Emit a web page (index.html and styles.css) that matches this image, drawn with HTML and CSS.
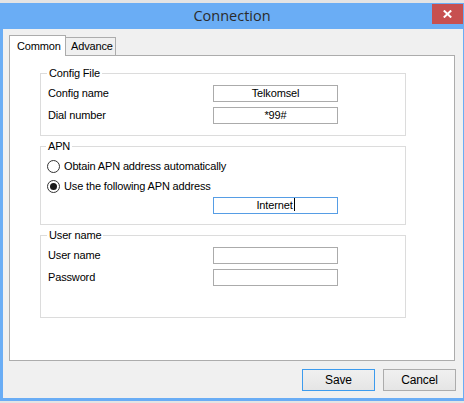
FILE: index.html
```html
<!DOCTYPE html>
<html>
<head>
<meta charset="utf-8">
<link rel="stylesheet" href="styles.css">
</head>
<body>
<div class="screen">
  <div class="window">
    <div class="titlebar">
      <span class="spacer"></span>
      <span class="title">Connection</span>
      <span class="controls">
        <span class="close">
          <svg width="9" height="8" viewBox="0 0 9 8"><path d="M0.8 0.5 L8.2 7.5 M8.2 0.5 L0.8 7.5" stroke="#fff" stroke-width="2" fill="none"/></svg>
        </span>
      </span>
    </div>
    <div class="client">
      <div class="tabs">
        <div class="tab active">Common</div>
        <div class="tab">Advance</div>
      </div>
      <div class="panel">
        <fieldset class="group g1">
          <legend>Config File</legend>
          <div class="row"><span class="label">Config name</span><span class="input">Telkomsel</span></div>
          <div class="row"><span class="label">Dial number</span><span class="input">*99#</span></div>
        </fieldset>
        <fieldset class="group g2">
          <legend>APN</legend>
          <div class="radio-row"><span class="radio"></span><span>Obtain APN address automatically</span></div>
          <div class="radio-row"><span class="radio checked"></span><span>Use the following APN address</span></div>
          <div class="row indent"><span class="input focus">Internet<span class="caret"></span></span></div>
        </fieldset>
        <fieldset class="group g3">
          <legend>User name</legend>
          <div class="row"><span class="label">User name</span><span class="input"></span></div>
          <div class="row"><span class="label">Password</span><span class="input"></span></div>
        </fieldset>
      </div>
      <div class="buttons">
        <div class="btn default">Save</div>
        <div class="btn">Cancel</div>
      </div>
    </div>
  </div>
</div>
</body>
</html>
```

FILE: styles.css
```css
html, body {
  margin: 0;
  padding: 0;
}
body {
  background: #e4e4e4;
  font-family: "Liberation Sans", Arial, sans-serif;
  font-size: 11px;
  letter-spacing: -0.15px;
  color: #000;
}
.screen {
  width: 464px;
  height: 403px;
  padding-top: 3px;
  box-sizing: border-box;
  overflow: hidden;
}
.window {
  width: 464px;
  height: 398px;
  background: #6aadf5;
  display: flex;
  flex-direction: column;
}
.titlebar {
  height: 26px;
  display: grid;
  grid-template-columns: 1fr auto 1fr;
  align-items: start;
}
.title {
  font-family: "Open Sans", "Noto Sans", sans-serif;
  font-size: 14.5px;
  letter-spacing: 0;
  color: #2b2b2b;
  line-height: 25px;
}
.controls {
  display: flex;
  justify-content: flex-end;
}
.close {
  width: 31px;
  height: 20px;
  margin-top: 1px;
  margin-right: 1px;
  background: #c75050;
  display: flex;
  align-items: center;
  justify-content: center;
}
.close svg {
  display: block;
}
.client {
  margin: 0 1px 3px 3px;
  flex: 1;
  background: #f0f0f0;
  padding: 6px 8px 0 6px;
  display: flex;
  flex-direction: column;
}
.tabs {
  display: flex;
  align-items: flex-end;
  height: 20px;
  position: relative;
  z-index: 1;
}
.tab {
  box-sizing: border-box;
  border: 1px solid #acacac;
  border-bottom: none;
  background: #f0f0f0;
  height: 18px;
  line-height: 17px;
  padding: 0 5px;
  width: 51px;
  margin-left: -1px;
  text-align: center;
}
.tab.active {
  background: #fff;
  height: 21px;
  width: 57px;
  line-height: 20px;
  margin-left: 0;
  margin-bottom: -1px;
  padding: 0 7px;
  position: relative;
  z-index: 2;
}
.panel {
  box-sizing: border-box;
  height: 306px;
  border: 1px solid #acacac;
  background: #fff;
  padding: 11px 0 0 30px;
}
.group {
  box-sizing: border-box;
  width: 366px;
  margin: 0;
  border: 1px solid #dcdcdc;
  padding: 5px 0 11px 7px;
  min-width: 0;
}
.group legend {
  padding: 0 2px;
  margin-left: -1px;
  line-height: 13px;
}
.g2 {
  margin-top: 4px;
  padding: 3px 0 10px 6px;
}
.g3 {
  margin-top: 4px;
  padding: 5px 0 31px 7px;
}
.row {
  display: flex;
  align-items: center;
  height: 17px;
}
.row + .row {
  margin-top: 5px;
}
.label {
  width: 165px;
  padding-bottom: 2px;
}
.input {
  box-sizing: border-box;
  width: 125px;
  height: 17px;
  border: 1px solid #ababab;
  background: #fff;
  text-align: center;
  line-height: 15px;
  color: #000;
}
.input.focus {
  border-color: #569de5;
}
.caret {
  display: inline-block;
  width: 1px;
  height: 13px;
  background: #000;
  vertical-align: -2px;
  margin-left: 1px;
}
.row.indent {
  margin-top: 1px;
  padding-left: 166px;
}
.radio-row {
  display: flex;
  align-items: center;
  height: 20px;
}
.radio {
  box-sizing: border-box;
  width: 13px;
  height: 13px;
  border-radius: 50%;
  border: 1px solid #333;
  background: #fff;
  margin-right: 4px;
  display: flex;
  align-items: center;
  justify-content: center;
}
.radio.checked::after {
  content: "";
  width: 7px;
  height: 7px;
  border-radius: 50%;
  background: #1a1a1a;
}
.buttons {
  display: flex;
  justify-content: flex-end;
  gap: 8px;
  margin-top: 8px;
  margin-right: -1px;
}
.btn {
  box-sizing: border-box;
  width: 73px;
  height: 22px;
  border: 1px solid #acacac;
  background: linear-gradient(#f0f0f0, #e5e5e5);
  text-align: center;
  line-height: 20px;
  font-size: 12px;
}
.btn.default {
  border-color: #3c9bee;
}
```
